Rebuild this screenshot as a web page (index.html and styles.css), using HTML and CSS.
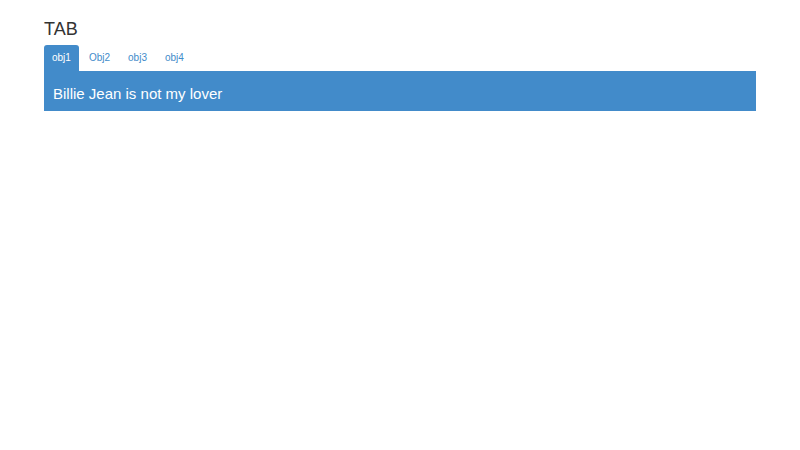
FILE: index.html
```html
<!DOCTYPE html>
<html>
<head>
<meta charset="utf-8">
<link rel="stylesheet" href="styles.css">
</head>
<body>
<div class="container">
  <h1 class="title">TAB</h1>
  <ul class="tabs">
    <li class="tab active">obj1</li>
    <li class="tab">Obj2</li>
    <li class="tab">obj3</li>
    <li class="tab">obj4</li>
  </ul>
  <div class="panel">
    <p class="panel-text">Billie Jean is not my lover</p>
  </div>
</div>
</body>
</html>
```
FILE: styles.css
```css
html, body {
  margin: 0;
  padding: 0;
  background: #ffffff;
  font-family: "Liberation Sans", Arial, sans-serif;
  color: #333333;
}
.container {
  width: 712px;
  margin: 0 44px;
  padding-top: 19px;
}
.title {
  margin: 0 0 6px 0;
  font-size: 18px;
  line-height: 20px;
  font-weight: normal;
  color: #333333;
}
.tabs {
  list-style: none;
  margin: 0;
  padding: 0;
  display: flex;
}
.tab {
  font-size: 10px;
  line-height: 14px;
  padding: 6px 8px;
  margin-right: 2px;
  color: #428bca;
  border-radius: 3px 3px 0 0;
}
.tab.active {
  background: #428bca;
  color: #ffffff;
}
.panel {
  background: #428bca;
  padding: 13px 9px 7px 9px;
}
.panel-text {
  margin: 0;
  font-size: 15px;
  line-height: 20px;
  color: #ffffff;
}
```
